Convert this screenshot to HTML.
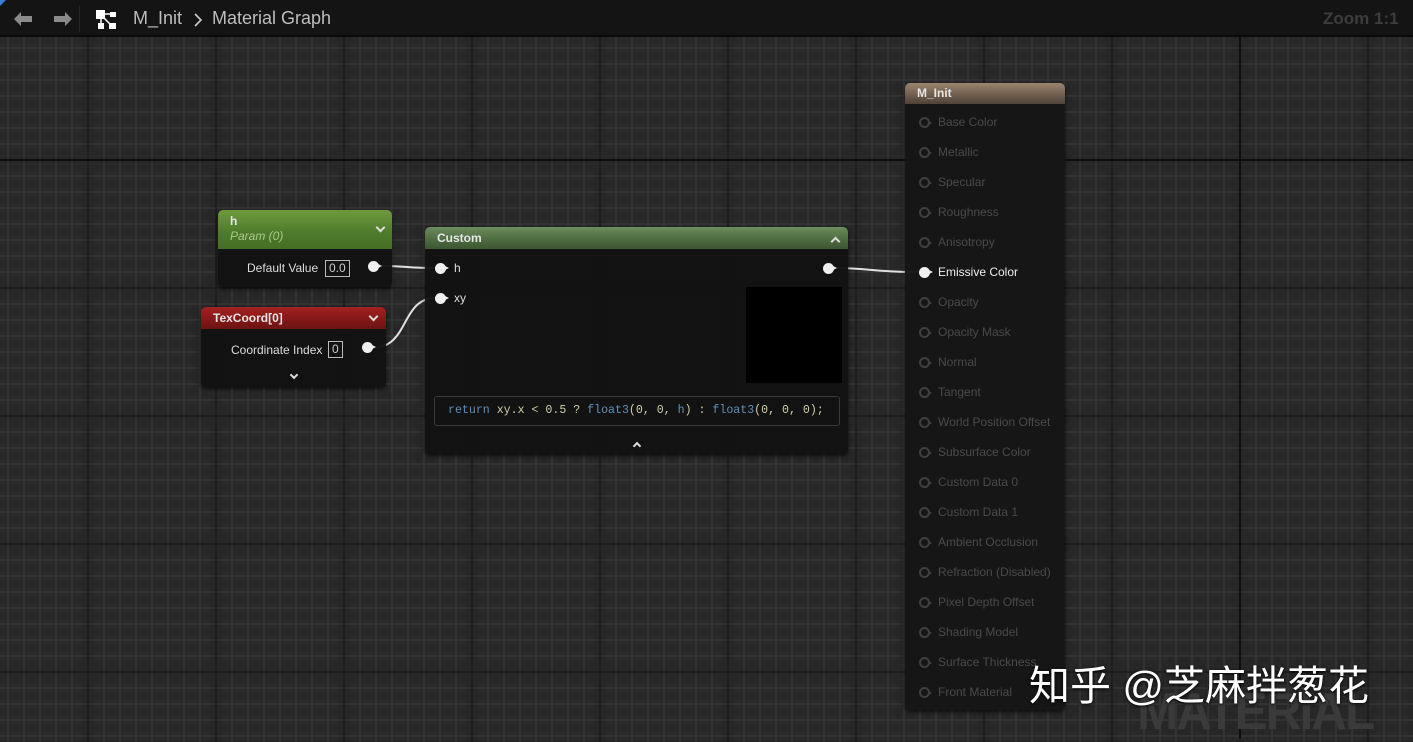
<!DOCTYPE html>
<html><head><meta charset="utf-8"><style>
*{margin:0;padding:0;box-sizing:border-box}
body{width:1413px;height:738px;overflow:hidden;position:relative;font-family:"Liberation Sans",sans-serif;
background-color:#272727;
background-image:
linear-gradient(90deg,#0e0e0e 2px,transparent 2px),
linear-gradient(180deg,#0e0e0e 2px,transparent 2px),
linear-gradient(90deg,#1e1e1e 2px,transparent 2px),
linear-gradient(180deg,#1e1e1e 2px,transparent 2px),
linear-gradient(90deg,#333 2px,transparent 2px),
linear-gradient(180deg,#333 2px,transparent 2px);
background-size:1413px 738px,1413px 738px,128px 128px,128px 128px,16px 16px,16px 16px;
background-position:1239px 0,0 159px,87px 0,0 31px,7px 0,0 -1px;
background-repeat:no-repeat,no-repeat,repeat,repeat,repeat,repeat}
.bar{position:absolute;left:0;top:0;width:1413px;height:37px;background:#141414;border-bottom:2px solid #0a0a0a}
.node{position:absolute;background:rgba(18,18,18,.96);border-radius:5px;box-shadow:0 2px 4px rgba(0,0,0,.7);color:#ddd;font-size:12px}
.hdr{height:22px;border-radius:5px 5px 0 0;padding:4px 12px;font-weight:bold;font-size:12px;color:#e6e6e6}
.pin{position:absolute;width:11px;height:11px;border-radius:50%;background:#f0f0f0}
.pin:after{content:"";position:absolute;left:10px;top:3px;border-left:4px solid #f0f0f0;border-top:2.5px solid transparent;border-bottom:2.5px solid transparent}
.dpin{position:absolute;width:11px;height:11px;border-radius:50%;border:2px solid #3f3f3f}
.dpin:after{content:"";position:absolute;left:8px;top:1.5px;border-left:3px solid #3f3f3f;border-top:2.5px solid transparent;border-bottom:2.5px solid transparent}
.t{position:absolute;font-size:12px;white-space:nowrap}
.chev{position:absolute;width:7px;height:7px;border-right:2px solid #ddd;border-bottom:2px solid #ddd}
.box{position:absolute;border:1px solid #bbb;font-size:12px;color:#ccc;padding:0 3px;line-height:15px;height:17px}
</style></head><body>
<div class="bar">
<div style="position:absolute;left:0;top:0;border-top:6px solid #3a7fd6;border-right:6px solid transparent"></div>
<div style="position:absolute;left:79px;top:6px;width:1px;height:26px;background:#262626"></div>
<svg style="position:absolute;left:12px;top:10px" width="64" height="18"><g fill="#8a8a8a"><path d="M2 9 L9 2 L9 6 L20 6 L20 12 L9 12 L9 16 Z"/><path d="M60 9 L53 2 L53 6 L42 6 L42 12 L53 12 L53 16 Z"/></g></svg>
<svg style="position:absolute;left:95px;top:9px" width="24" height="22"><rect x="1" y="1" width="9" height="9" fill="#fff"/><rect x="15" y="3" width="6" height="5" fill="#fff"/><rect x="3" y="14" width="6" height="6" fill="#fff"/><rect x="14" y="14" width="7" height="6" fill="#fff"/><path d="M10 5 L15 5 M6 10 L6 14 M9 9 L15 15" stroke="#fff" stroke-width="1.5"/></svg>
<div class="t" style="left:133px;top:8px;font-size:18px;color:#bdbdbd">M_Init</div>
<svg style="position:absolute;left:193px;top:12px" width="10" height="16"><path d="M2 2 L8 8 L2 14" stroke="#ccc" stroke-width="1.6" fill="none"/></svg>
<div class="t" style="left:212px;top:8px;font-size:18px;color:#bdbdbd">Material Graph</div>
<div class="t" style="left:1323px;top:9px;font-size:17px;font-weight:bold;color:#3d3d3d">Zoom 1:1</div>
</div>

<div class="t" style="left:1137px;top:682px;font-size:52px;font-weight:bold;color:#3a3a3a;letter-spacing:-2px;transform:scaleX(.95);transform-origin:left">MATERIAL</div>

<svg style="position:absolute;left:0;top:0" width="1413" height="738"><g stroke="#e0e0e0" stroke-width="2" fill="none">
<path d="M380 266 C410 266,405 268,436 268"/>
<path d="M372 348 C410 348,400 298,436 298"/>
<path d="M835 268 C870 268,870 272,918 272"/>
</g></svg>

<div class="node" style="left:218px;top:210px;width:174px;height:77px">
<div class="hdr" style="height:39px;background:linear-gradient(180deg,#6e9a3e,#4d7a2a 60%,#466f26);padding:4px 12px">h<div style="font-weight:normal;font-style:italic;color:#a9c98a;margin-top:1px">Param (0)</div></div>
<div class="chev" style="left:159px;top:14px;transform:rotate(45deg)"></div>
<div class="t" style="left:29px;top:51px">Default Value</div>
<div class="box" style="left:107px;top:50px">0.0</div>
<div class="pin" style="left:150px;top:51px"></div>
</div>
<div class="node" style="left:201px;top:307px;width:185px;height:80px">
<div class="hdr" style="background:linear-gradient(180deg,#a42020,#7e1616 70%,#6a1414);padding:4px 12px">TexCoord[0]</div>
<div class="chev" style="left:169px;top:6px;transform:rotate(45deg)"></div>
<div class="t" style="left:30px;top:36px">Coordinate Index</div>
<div class="box" style="left:127px;top:34px">0</div>
<div class="pin" style="left:161px;top:35px"></div>
<div class="chev" style="left:90px;top:65px;transform:rotate(45deg);width:6px;height:6px"></div>
</div>
<div class="node" style="left:425px;top:227px;width:423px;height:227px">
<div class="hdr" style="background:linear-gradient(180deg,#6b8c5c,#4c6a3f 60%,#3d5533);padding:4px 12px">Custom</div>
<div class="chev" style="left:407px;top:11px;transform:rotate(-135deg)"></div>
<div class="pin" style="left:10px;top:36px"></div><div class="t" style="left:29px;top:34px">h</div>
<div class="pin" style="left:10px;top:66px"></div><div class="t" style="left:29px;top:64px">xy</div>
<div class="pin" style="left:398px;top:36px"></div>
<div style="position:absolute;left:321px;top:60px;width:96px;height:96px;background:#000"></div>
<div style="position:absolute;left:9px;top:169px;width:406px;height:30px;border:1px solid #3a3a3a;border-radius:3px;font-family:'Liberation Mono',monospace;font-size:11.6px;line-height:28px;padding-left:13px;color:#cfcfa8;white-space:pre"><span style="color:#5f8fb8">return</span> xy.x &lt; 0.5 ? <span style="color:#5f8fb8">float3</span>(0, 0, <span style="color:#5f8fb8">h</span>) : <span style="color:#5f8fb8">float3</span>(0, 0, 0);</div>
<div class="chev" style="left:209px;top:216px;transform:rotate(-135deg);width:6px;height:6px"></div>
</div>
<div class="node" style="left:905px;top:83px;width:160px;height:627px;background:rgba(22,22,22,.97)">
<div class="hdr" style="height:21px;background:linear-gradient(180deg,#9a8570,#6e5c4c 60%,#4d4238);padding:3px 12px">M_Init</div>
<div id="rows"></div>
</div>
<script>
var n=["Base Color","Metallic","Specular","Roughness","Anisotropy","Emissive Color","Opacity","Opacity Mask","Normal","Tangent","World Position Offset","Subsurface Color","Custom Data 0","Custom Data 1","Ambient Occlusion","Refraction (Disabled)","Pixel Depth Offset","Shading Model","Surface Thickness","Front Material"],h="";
n.forEach(function(s,i){var y=34+30*i;var on=i==5;
h+='<div class="'+(on?'pin':'dpin')+'" style="left:14px;top:'+y+'px"></div><div class="t" style="left:33px;top:'+(y-2)+'px;color:'+(on?'#eee':'#4a4a4a')+'">'+s+'</div>';});
document.getElementById('rows').innerHTML=h;
</script>
<div class="t" style="left:1029px;top:652px;font-size:41px;color:#fff;font-family:'Liberation Sans','Noto Sans CJK SC',sans-serif;text-shadow:0 1px 3px #000">知乎 @芝麻拌葱花</div>
</body></html>
